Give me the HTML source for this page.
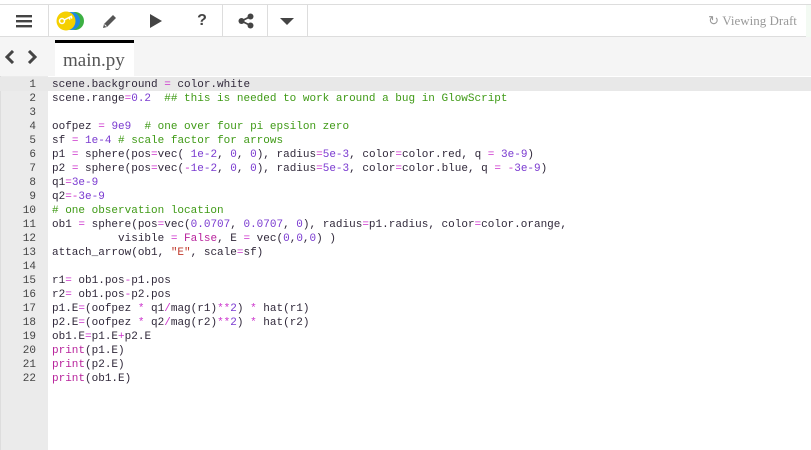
<!DOCTYPE html>
<html><head><style>
body{margin:0;width:811px;height:450px;overflow:hidden;background:#fff;font-family:"Liberation Sans",sans-serif;position:relative}
.tb{position:absolute;left:0;top:4px;width:811px;height:33px;border-top:1px solid #ddd;border-bottom:1px solid #ddd;box-sizing:border-box;background:#fff}
.sep{position:absolute;top:0;width:1px;height:32px;background:#ddd}
.ic{position:absolute;top:0;height:32px;display:flex;align-items:center;justify-content:center;color:#444}
.tabs{position:absolute;left:0;top:37px;width:811px;height:39px;background:#f5f5f5}
.tab{position:absolute;left:55px;top:3px;width:79px;height:36px;background:#fff;border-top:3px solid #000;box-sizing:border-box;font-family:"Liberation Serif",serif;font-size:19px;color:#555;padding:7px 0 0 8px}
.gut{position:absolute;left:0;top:76px;width:48px;height:374px;background:#ebebeb;border-left:1px solid #ddd;box-sizing:border-box}
.code{position:absolute;left:0;top:77px;width:811px;font-family:"Liberation Mono",monospace;font-size:11px;line-height:14px;color:#30283a}
.l{height:14px;white-space:pre;position:relative;padding-top:1px;box-sizing:border-box}
.n{display:inline-block;width:36px;text-align:right;color:#444;margin-right:16px}
.hl{background:#e8e8e8}
.o{color:#cc33cc}.d{color:#7a3ad0}.c{color:#3f9a16}.s{color:#c0392b}.k{color:#b8239c}
</style></head><body>
<div class="tb">
 <div class="ic" style="left:0;width:48px"><svg width="16" height="14"><rect y="1" width="16" height="2.4" fill="#444"/><rect y="6" width="16" height="2.4" fill="#444"/><rect y="11" width="16" height="2.4" fill="#444"/></svg></div>
 <div class="sep" style="left:48px"></div>
 <div class="ic" style="left:52px;width:34px"><svg width="32" height="20"><circle cx="22" cy="10" r="9" fill="#3cb043"/><circle cx="18" cy="10" r="9" fill="#1e88e5"/><circle cx="13" cy="10" r="9.5" fill="#f5d000"/><circle cx="9" cy="10" r="2.5" fill="none" stroke="#fff" stroke-width="1.5"/><path d="M11 9 L19 5 M16 6.5 l1 2 M18 5.5 l1 2" stroke="#fff" stroke-width="1.5"/></svg></div>
 <div class="ic" style="left:98px;width:24px"><svg width="16" height="16"><path d="M1 15 L2 11 L11 2 L14 5 L5 14 Z" fill="#555"/><path d="M2.5 11.5 L4.5 13.5" stroke="#fff" stroke-width="1"/></svg></div>
 <div class="ic" style="left:144px;width:24px"><svg width="14" height="16"><path d="M1 1 L13 8 L1 15 Z" fill="#444"/></svg></div>
 <div class="ic" style="left:190px;width:24px;font-weight:bold;font-size:16px">?</div>
 <div class="sep" style="left:222px"></div>
 <div class="ic" style="left:234px;width:24px"><svg width="16" height="16"><circle cx="12.5" cy="3.5" r="3" fill="#444"/><circle cx="3.5" cy="8" r="3" fill="#444"/><circle cx="12.5" cy="12.5" r="3" fill="#444"/><path d="M12.5 3.5 L3.5 8 L12.5 12.5" stroke="#444" stroke-width="1.8" fill="none"/></svg></div>
 <div class="sep" style="left:267px"></div>
 <div class="ic" style="left:275px;width:24px"><svg width="14" height="8"><path d="M0 1 L14 1 L7 8 Z" fill="#444"/></svg></div>
 <div class="sep" style="left:307px"></div>
 <div class="ic" style="left:700px;width:105px;color:#999;font-family:'Liberation Serif',serif;font-size:13px">&#x21bb;&nbsp;Viewing Draft</div>
 <div style="position:absolute;right:0;top:0;width:5px;height:32px;background:#f3faf3"></div>
</div>
<div class="tabs">
 <div style="position:absolute;left:5px;top:13px"><svg width="32" height="14"><path d="M8 1 L2 7 L8 13" stroke="#444" stroke-width="3" fill="none"/><path d="M24 1 L30 7 L24 13" stroke="#444" stroke-width="3" fill="none"/></svg></div>
 <div class="tab">main.py</div>
</div>
<div class="gut"></div>
<div class="code">
<div class="l hl"><span class="n">1</span>scene.background <span class="o">=</span> color.white</div>
<div class="l"><span class="n">2</span>scene.range<span class="o">=</span><span class="d">0.2</span>  <span class="c">## this is needed to work around a bug in GlowScript</span></div>
<div class="l"><span class="n">3</span></div>
<div class="l"><span class="n">4</span>oofpez <span class="o">=</span> <span class="d">9e9</span>  <span class="c"># one over four pi epsilon zero</span></div>
<div class="l"><span class="n">5</span>sf <span class="o">=</span> <span class="d">1e-4</span> <span class="c"># scale factor for arrows</span></div>
<div class="l"><span class="n">6</span>p1 <span class="o">=</span> sphere(pos<span class="o">=</span>vec( <span class="d">1e-2</span>, <span class="d">0</span>, <span class="d">0</span>), radius<span class="o">=</span><span class="d">5e-3</span>, color<span class="o">=</span>color.red, q <span class="o">=</span> <span class="d">3e-9</span>)</div>
<div class="l"><span class="n">7</span>p2 <span class="o">=</span> sphere(pos<span class="o">=</span>vec(<span class="o">-</span><span class="d">1e-2</span>, <span class="d">0</span>, <span class="d">0</span>), radius<span class="o">=</span><span class="d">5e-3</span>, color<span class="o">=</span>color.blue, q <span class="o">=</span> <span class="o">-</span><span class="d">3e-9</span>)</div>
<div class="l"><span class="n">8</span>q1<span class="o">=</span><span class="d">3e-9</span></div>
<div class="l"><span class="n">9</span>q2<span class="o">=-</span><span class="d">3e-9</span></div>
<div class="l"><span class="n">10</span><span class="c"># one observation location</span></div>
<div class="l"><span class="n">11</span>ob1 <span class="o">=</span> sphere(pos<span class="o">=</span>vec(<span class="d">0.0707</span>, <span class="d">0.0707</span>, <span class="d">0</span>), radius<span class="o">=</span>p1.radius, color<span class="o">=</span>color.orange,</div>
<div class="l"><span class="n">12</span>          visible <span class="o">=</span> <span class="k">False</span>, E <span class="o">=</span> vec(<span class="d">0</span>,<span class="d">0</span>,<span class="d">0</span>) )</div>
<div class="l"><span class="n">13</span>attach_arrow(ob1, <span class="s">"E"</span>, scale<span class="o">=</span>sf)</div>
<div class="l"><span class="n">14</span></div>
<div class="l"><span class="n">15</span>r1<span class="o">=</span> ob1.pos<span class="o">-</span>p1.pos</div>
<div class="l"><span class="n">16</span>r2<span class="o">=</span> ob1.pos<span class="o">-</span>p2.pos</div>
<div class="l"><span class="n">17</span>p1.E<span class="o">=</span>(oofpez <span class="o">*</span> q1<span class="o">/</span>mag(r1)<span class="o">**</span><span class="d">2</span>) <span class="o">*</span> hat(r1)</div>
<div class="l"><span class="n">18</span>p2.E<span class="o">=</span>(oofpez <span class="o">*</span> q2<span class="o">/</span>mag(r2)<span class="o">**</span><span class="d">2</span>) <span class="o">*</span> hat(r2)</div>
<div class="l"><span class="n">19</span>ob1.E<span class="o">=</span>p1.E<span class="o">+</span>p2.E</div>
<div class="l"><span class="n">20</span><span class="k">print</span>(p1.E)</div>
<div class="l"><span class="n">21</span><span class="k">print</span>(p2.E)</div>
<div class="l"><span class="n">22</span><span class="k">print</span>(ob1.E)</div>
</div>
</body></html>
